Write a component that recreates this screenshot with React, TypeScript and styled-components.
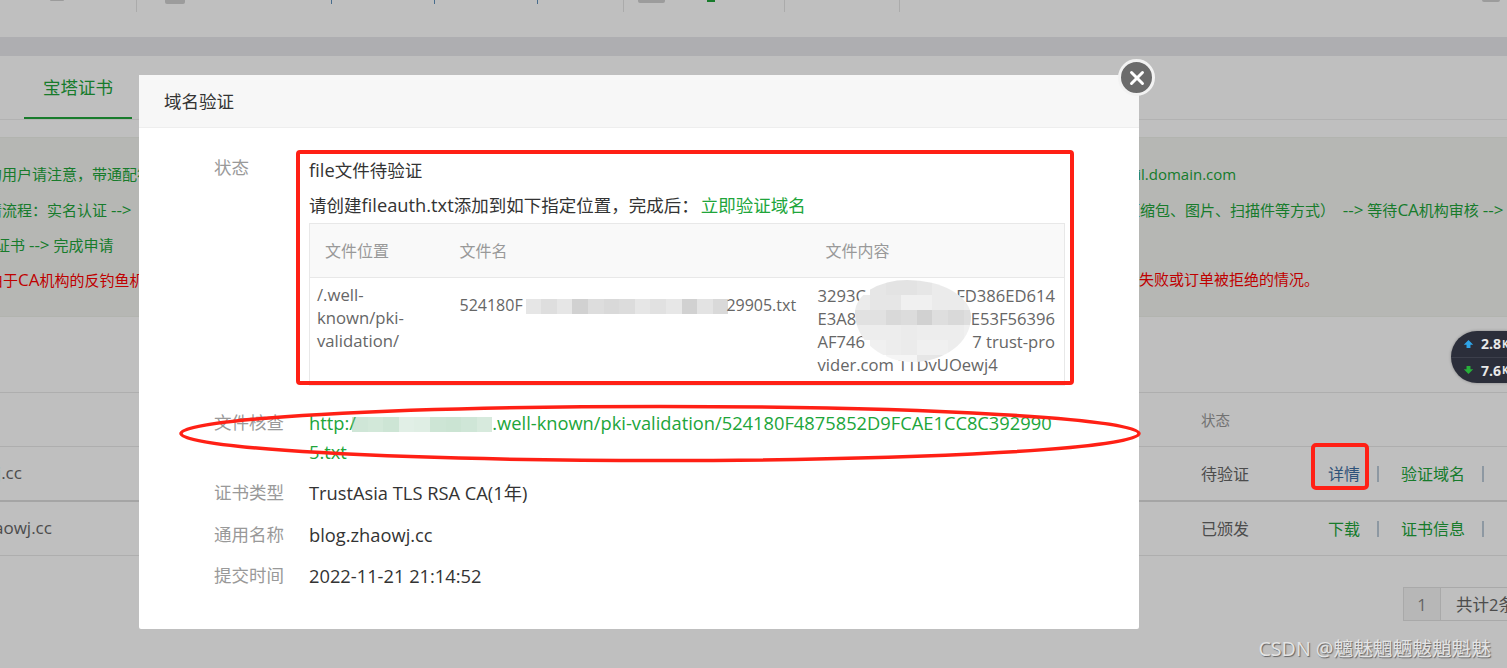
import styled, { createGlobalStyle } from "styled-components";
import { X } from "lucide-react";

const FONT = `"Open Sans", "Noto Sans CJK SC", sans-serif`;
const GREEN = "#20a53a";
const RED = "#ff2015";

const GlobalStyle = createGlobalStyle`
    html, body {
        margin: 0;
        padding: 0;
        overflow: hidden;
        background: #fff;
    }
    body {
        font-family: ${FONT};
        color: #333;
    }
`;

const Mosaic = ({ shades, cols, tint = "128,128,128" }: { shades: number[]; cols: number; tint?: string }) => (
    <MosaicGrid $cols={cols}>
        {shades.map((s, i) => (
            <MosaicCell key={i} $tint={tint} $alpha={s} />
        ))}
    </MosaicGrid>
);

const filenameMask = [0.2, 0.26, 0.2, 0.36, 0.27, 0.3, 0.28, 0.2, 0.24, 0.19, 0.36, 0.22, 0.3];
const urlMask = [0.38, 0.36, 0.4, 0.24, 0.26, 0.4, 0.42, 0.38, 0.32];
const blobMask = [
    0, 0.2, 0.22, 0.22, 0.2, 0.16, 0.16, 0,
    0.16, 0.2, 0.2, 0.12, 0.12, 0.16, 0.16, 0.14,
    0.24, 0.24, 0.3, 0.28, 0.36, 0.26, 0.3, 0.26,
    0.14, 0.14, 0.14, 0.16, 0.14, 0.14, 0.14, 0.12,
    0, 0.12, 0.14, 0.16, 0.12, 0.12, 0.14, 0.1,
    0, 0, 0.08, 0.08, 0.2, 0.2, 0.14, 0,
];

export default function App() {
    return (
        <>
            <GlobalStyle />
            <Page>
                <TopBar>
                    <TopCell $w={137}><Clip $left={50} $w={14} /></TopCell>
                    <TopCell $w={487}>
                        <Clip $left={28} $w={20} $h={4} />
                        <Tick $left={194} />
                        <Tick $left={297} />
                        <Tick $left={400} />
                    </TopCell>
                    <TopCell $w={161}><Clip $left={14} $w={27} $h={3} /><GreenClip $left={83} /></TopCell>
                    <TopCell $w={115} />
                    <TopFill><Clip $left={582} $w={18} $h={2} /></TopFill>
                </TopBar>
                <Strip />
                <Tabs>
                    <Tab>宝塔证书</Tab>
                </Tabs>
                <Alert>
                    <AlertLine>
                        <AlertLeft $shift={-13}>的用户请注意，带通配符的证书</AlertLeft>
                        <AlertRight $shift={-24}>mail.domain.com</AlertRight>
                    </AlertLine>
                    <AlertLine>
                        <AlertLeft $shift={-13}>请流程：实名认证 <Arrow>--&gt;</Arrow> &nbsp;&nbsp;提交申请</AlertLeft>
                        <AlertRight $shift={-14}>压缩包、图片、扫描件等方式） &nbsp;<Arrow>--&gt;</Arrow> 等待<Arrow>CA</Arrow>机构审核 <Arrow>--&gt;</Arrow></AlertRight>
                    </AlertLine>
                    <AlertLine>
                        <AlertLeft $shift={-5}>证书 <Arrow>--&gt;</Arrow> 完成申请</AlertLeft>
                    </AlertLine>
                    <AlertLine $danger>
                        <AlertLeft $shift={-12}>由于<Arrow>CA</Arrow>机构的反钓鱼机制，部分域名</AlertLeft>
                        <AlertRight $shift={0}>失败或订单被拒绝的情况。</AlertRight>
                    </AlertLine>
                </Alert>
                <BackTable>
                    <BackHead>
                        <StatusHead>状态</StatusHead>
                    </BackHead>
                    <BackRow $thick>
                        <DomainCell><DomainText $shift={-93}>blog.zhaowj.cc</DomainText></DomainCell>
                        <StatusCell>待验证</StatusCell>
                        <Actions>
                            <ActionLink $plain>详情</ActionLink>
                            <Divider />
                            <ActionLink>验证域名</ActionLink>
                            <Divider />
                        </Actions>
                    </BackRow>
                    <BackRow>
                        <DomainCell><DomainText $shift={-63}>blog.zhaowj.cc</DomainText></DomainCell>
                        <StatusCell>已颁发</StatusCell>
                        <Actions>
                            <ActionLink>下载</ActionLink>
                            <Divider />
                            <ActionLink>证书信息</ActionLink>
                            <Divider />
                        </Actions>
                    </BackRow>
                </BackTable>
                <Pager>
                    <PageNum>1</PageNum>
                    <PageTotal>共计2条</PageTotal>
                </Pager>

                <Shade />

                <Dialog>
                    <DialogHead>域名验证</DialogHead>
                    <DialogBody>
                        <Field>
                            <FieldLabel $raised>状态</FieldLabel>
                            <FieldValue>
                                <StatusLine><Latin>file</Latin>文件待验证</StatusLine>
                                <HintLine>
                                    请创建<Latin>fileauth.txt</Latin>添加到如下指定位置，完成后：<VerifyLink>立即验证域名</VerifyLink>
                                </HintLine>
                                <FileTable>
                                    <colgroup>
                                        <col width={135} />
                                        <col width={366} />
                                        <col width={254} />
                                    </colgroup>
                                    <thead>
                                        <tr>
                                            <FileTh>文件位置</FileTh>
                                            <FileTh>文件名</FileTh>
                                            <FileTh>文件内容</FileTh>
                                        </tr>
                                    </thead>
                                    <tbody>
                                        <tr>
                                            <PathCell>/.well-known/pki-validation/</PathCell>
                                            <NameCell>
                                                524180F<InlineMask $before={3} $after={-2}><Mosaic shades={filenameMask} cols={13} /></InlineMask>29905.txt
                                            </NameCell>
                                            <ContentCell>
                                                <SplitLine><span>3293C</span><span>FD386ED614</span></SplitLine>
                                                <SplitLine><span>E3A8</span><span>E53F56396</span></SplitLine>
                                                <SplitLine><span>AF746</span><span>7 trust-pro</span></SplitLine>
                                                <SplitLine><span>vider.com TTDvUOewj4</span></SplitLine>
                                                <Blob><Mosaic shades={blobMask} cols={8} /></Blob>
                                            </ContentCell>
                                        </tr>
                                    </tbody>
                                </FileTable>
                            </FieldValue>
                        </Field>
                        <Field>
                            <FieldLabel>文件核查</FieldLabel>
                            <FieldValue>
                                <UrlLine>
                                    http:/<InlineMask $before={-4} $after={0}><Mosaic shades={urlMask} cols={9} tint="130,190,150" /></InlineMask>.well-known/pki-validation/524180F4875852D9FCAE1CC8C392990
                                </UrlLine>
                                <UrlLine>5.txt</UrlLine>
                            </FieldValue>
                        </Field>
                        <Field>
                            <FieldLabel>证书类型</FieldLabel>
                            <FieldValue>TrustAsia TLS RSA CA(1年)</FieldValue>
                        </Field>
                        <Field>
                            <FieldLabel>通用名称</FieldLabel>
                            <FieldValue>blog.zhaowj.cc</FieldValue>
                        </Field>
                        <Field>
                            <FieldLabel>提交时间</FieldLabel>
                            <FieldValue>2022-11-21 21:14:52</FieldValue>
                        </Field>
                    </DialogBody>
                    <CloseButton>
                        <X size={22} strokeWidth={3.2} color="#fff" />
                    </CloseButton>
                </Dialog>

                <RedBox />
                <RedDetail />
                <RedRing viewBox="0 0 1507 668">
                    <ellipse cx="660" cy="433.5" rx="479" ry="27" fill="none" stroke={RED} strokeWidth="3.5" />
                </RedRing>

                <SpeedBadge>
                    <SpeedRow>
                        <svg width="11" height="10" viewBox="0 0 14 12">
                            <path d="M7 1 L13 7 H9.5 V11 H4.5 V7 H1 Z" fill="#2fa5e8" />
                        </svg>
                        <span>2.8</span><SpeedUnit>K</SpeedUnit>
                    </SpeedRow>
                    <SpeedRow>
                        <svg width="11" height="10" viewBox="0 0 14 12">
                            <path d="M7 11 L13 5 H9.5 V1 H4.5 V5 H1 Z" fill="#27b03a" />
                        </svg>
                        <span>7.6</span><SpeedUnit>K</SpeedUnit>
                    </SpeedRow>
                </SpeedBadge>

                <Watermark>CSDN @魑魅魍魉魃魈魁魅</Watermark>
            </Page>
        </>
    );
}

const Page = styled.div`
    position: relative;
    width: 1507px;
    height: 668px;
    overflow: hidden;
    background: #fff;
`;

const TopBar = styled.div`
    display: flex;
    height: 37px;
`;

const TopCell = styled.div<{ $w: number }>`
    position: relative;
    flex: 0 0 ${(p) => p.$w}px;
    height: 12px;
    border-right: 1px solid #e4e4e4;
    box-sizing: border-box;
`;

const TopFill = styled.div`
    position: relative;
    flex: 1;
`;

const Clip = styled.i<{ $left: number; $w: number; $h?: number }>`
    position: absolute;
    top: 0;
    left: ${(p) => p.$left}px;
    width: ${(p) => p.$w}px;
    height: ${(p) => p.$h ?? 1}px;
    background: #d0d0d0;
    border-radius: 0 0 2px 2px;
`;

const Tick = styled.i<{ $left: number }>`
    position: absolute;
    top: 0;
    left: ${(p) => p.$left}px;
    width: 1px;
    height: 4px;
    background: #5f90bd;
`;

const GreenClip = styled.i<{ $left: number }>`
    position: absolute;
    top: 0;
    left: ${(p) => p.$left}px;
    width: 8px;
    height: 2px;
    background: ${GREEN};
`;

const Strip = styled.div`
    height: 19px;
    background: #e9e9ed;
`;

const Tabs = styled.div`
    display: flex;
    height: 63px;
    padding-left: 24px;
    border-bottom: 1px solid #eee;
    box-sizing: content-box;
`;

const Tab = styled.div`
    width: 108px;
    height: 61px;
    line-height: 62px;
    text-align: center;
    font-size: 17.5px;
    color: ${GREEN};
    border-bottom: 2px solid ${GREEN};
`;

const Alert = styled.div`
    margin-top: 17px;
    height: 180px;
    padding-top: 20px;
    box-sizing: border-box;
    background: #f3f5f0;
    border-top: 1px solid #eef0ea;
    border-bottom: 1px solid #eef0ea;
    overflow: hidden;
`;

const AlertLine = styled.div<{ $danger?: boolean }>`
    display: flex;
    height: 35px;
    line-height: 33px;
    font-size: 15px;
    white-space: nowrap;
    color: ${(p) => (p.$danger ? "#ff0000" : GREEN)};
`;

const AlertLeft = styled.div<{ $shift: number }>`
    flex: 0 0 1139px;
    overflow: hidden;
    text-indent: ${(p) => p.$shift}px;
`;

const AlertRight = styled.div<{ $shift: number }>`
    margin-left: ${(p) => p.$shift}px;
`;

const Arrow = styled.span`
    font-size: 17px;
`;

const BackTable = styled.div`
    margin-top: 75px;
`;

const BackHead = styled.div`
    display: flex;
    height: 53px;
    padding-left: 1201px;
    align-items: center;
    border-top: 1px solid #e8e8e8;
    border-bottom: 1px solid #e8e8e8;
`;

const StatusHead = styled.div`
    font-size: 14.5px;
    color: #999;
`;

const BackRow = styled.div<{ $thick?: boolean }>`
    display: flex;
    align-items: center;
    box-sizing: border-box;
    height: ${(p) => (p.$thick ? 55 : 54)}px;
    padding-bottom: 2px;
    border-bottom: ${(p) => (p.$thick ? "2px solid #ddd" : "1px solid #e8e8e8")};
    font-size: 17px;
    color: #666;
`;

const DomainCell = styled.div`
    flex: 0 0 1201px;
    white-space: nowrap;
    overflow: hidden;
`;

const DomainText = styled.span<{ $shift: number }>`
    display: inline-block;
    margin-left: ${(p) => p.$shift}px;
`;

const StatusCell = styled.div`
    flex: 0 0 127px;
    font-size: 16px;
    color: #666;
`;

const Actions = styled.div`
    display: flex;
    align-items: center;
    font-size: 16px;
    white-space: nowrap;
`;

const ActionLink = styled.span<{ $plain?: boolean }>`
    color: ${(p) => (p.$plain ? "#3f6fa3" : GREEN)};
`;

const Divider = styled.i`
    width: 2px;
    height: 16px;
    margin: 3px 22px 0 17px;
    background: #bccbd8;
`;

const Pager = styled.div`
    display: flex;
    justify-content: flex-start;
    height: 34px;
    margin: 31px 0 0 1403px;
    font-size: 16.5px;
    color: #666;
`;

const PageNum = styled.div`
    flex: 0 0 38px;
    line-height: 34px;
    text-align: center;
    color: #888;
    background: #f5f5f5;
    border: 1px solid #e2e2e2;
    box-sizing: border-box;
`;

const PageTotal = styled.div`
    flex: 0 0 auto;
    padding-left: 15px;
    line-height: 34px;
    white-space: nowrap;
    border: 1px solid #e2e2e2;
    border-left: 0;
`;

const Shade = styled.div`
    position: absolute;
    inset: 0;
    background: rgba(0, 0, 0, 0.25);
`;

const Dialog = styled.div`
    position: absolute;
    left: 139px;
    top: 75px;
    width: 1000px;
    height: 554px;
    background: #fff;
    border-radius: 2px;
`;

const DialogHead = styled.div`
    height: 52px;
    padding-left: 25px;
    line-height: 52px;
    font-size: 17.5px;
    color: #333;
    background: #f7f7f7;
    border-bottom: 1px solid #eee;
`;

const DialogBody = styled.div`
    display: flex;
    flex-direction: column;
    gap: 12.5px;
    padding: 28px 75px 0;
`;

const Field = styled.div`
    display: flex;
    gap: 25px;
    font-size: 18.3px;
    line-height: 29px;
`;

const FieldLabel = styled.div<{ $raised?: boolean }>`
    flex: 0 0 70px;
    font-size: 17.5px;
    color: #999;
    white-space: nowrap;
    ${(p) => p.$raised && "margin-top: -3px;"}
`;

const FieldValue = styled.div`
    flex: 0 0 755px;
    color: #333;
    white-space: nowrap;
`;

const Latin = styled.span`
    font-size: 18.3px;
`;

const StatusLine = styled.div`
    height: 28px;
    font-size: 17.5px;
    line-height: 28px;
`;

const HintLine = styled.div`
    height: 28px;
    margin: 7px 0 4px;
    font-size: 17.5px;
    line-height: 28px;
`;

const VerifyLink = styled.span`
    margin-left: 2px;
    color: ${GREEN};
`;

const FileTable = styled.table`
    width: 755px;
    table-layout: fixed;
    border-collapse: collapse;
    margin-bottom: 9px;
    color: #666;
`;

const FileTh = styled.th`
    height: 52px;
    padding: 1px 15px 0;
    font-size: 16px;
    font-weight: 400;
    text-align: left;
    color: #999;
    background: #f9f9f9;
    border: 1px solid #e8e8e8;
    border-width: 1px 0 1px 0;

    &:first-child {
        border-left-width: 1px;
    }
    &:last-child {
        border-right-width: 1px;
    }
`;

const PathCell = styled.td`
    height: 102px;
    padding: 5px 7px 0;
    vertical-align: top;
    font-size: 16.7px;
    line-height: 23px;
    white-space: normal;
    border-left: 1px solid #e8e8e8;
    border-bottom: 1px solid #e8e8e8;
`;

const NameCell = styled.td`
    padding: 16px 15px 0;
    vertical-align: top;
    font-size: 16px;
    line-height: 23px;
    border-bottom: 1px solid #e8e8e8;
`;

const ContentCell = styled.td`
    position: relative;
    padding: 6px 9px 0 7px;
    vertical-align: top;
    font-size: 16.6px;
    line-height: 23px;
    border-right: 1px solid #e8e8e8;
    border-bottom: 1px solid #e8e8e8;
`;

const SplitLine = styled.div`
    display: flex;
    justify-content: space-between;
    height: 23px;
`;

const InlineMask = styled.span<{ $before: number; $after: number }>`
    display: inline-block;
    vertical-align: middle;
    margin: 0 ${(p) => p.$after}px 0 ${(p) => p.$before}px;
`;

const MosaicGrid = styled.span<{ $cols: number }>`
    display: grid;
    grid-template-columns: repeat(${(p) => p.$cols}, 15.6px);
    grid-auto-rows: 15px;
`;

const MosaicCell = styled.i<{ $tint: string; $alpha: number }>`
    background: rgba(${(p) => p.$tint}, ${(p) => p.$alpha});
`;

const Blob = styled.div`
    position: absolute;
    left: 44px;
    top: 2px;
    width: 116px;
    height: 82px;
    overflow: hidden;
    background: #fff;
    border-radius: 45% 55% 50% 50% / 40% 45% 55% 60%;
`;

const UrlLine = styled.div`
    height: 29px;
    color: ${GREEN};
`;

const CloseButton = styled.div`
    position: absolute;
    right: -16px;
    top: -16px;
    display: flex;
    align-items: center;
    justify-content: center;
    width: 37px;
    height: 37px;
    box-sizing: border-box;
    border: 3px solid #f2f2f2;
    border-radius: 50%;
    background: #6b6b6b;
`;

const RedBox = styled.div`
    position: absolute;
    left: 296px;
    top: 150px;
    width: 778px;
    height: 235px;
    box-sizing: border-box;
    border: 4px solid ${RED};
    border-radius: 4px;
`;

const RedDetail = styled.div`
    position: absolute;
    left: 1311px;
    top: 443px;
    width: 58px;
    height: 47px;
    box-sizing: border-box;
    border: 4px solid ${RED};
    border-radius: 5px;
`;

const RedRing = styled.svg`
    position: absolute;
    inset: 0;
    width: 1507px;
    height: 668px;
    pointer-events: none;
`;

const SpeedBadge = styled.div`
    position: absolute;
    left: 1451px;
    top: 331px;
    width: 80px;
    height: 52px;
    display: flex;
    flex-direction: column;
    background: #2b2e3a;
    border-radius: 26px;
    box-shadow: 0 0 3px rgba(0, 0, 0, 0.3);
`;

const SpeedRow = styled.div`
    display: flex;
    flex: 1;
    align-items: center;
    gap: 7px;
    padding-left: 12px;
    font-size: 14px;
    font-weight: 700;
    color: #e8e8e8;

    & + & {
        border-top: 1px solid #3c3f4b;
    }
`;

const SpeedUnit = styled.span`
    margin-left: -6px;
    font-size: 10px;
`;

const Watermark = styled.div`
    position: absolute;
    right: 16px;
    top: 635px;
    font-size: 19.7px;
    line-height: 27px;
    white-space: nowrap;
    color: #e4e4e4;
    text-shadow: 1px 1px 1px rgba(60, 60, 60, 0.7);
`;
